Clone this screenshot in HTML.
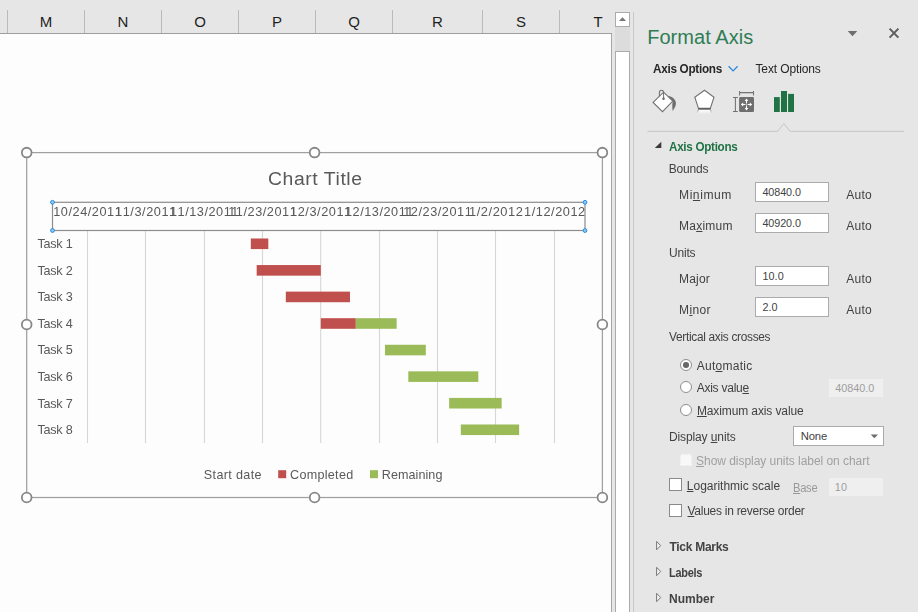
<!DOCTYPE html>
<html><head><meta charset="utf-8"><title>Format Axis</title>
<style>
html,body{margin:0;padding:0;}
body{width:918px;height:612px;overflow:hidden;background:#e6e6e6;font-family:"Liberation Sans",sans-serif;position:relative;}
#root{position:absolute;left:0;top:0;width:918px;height:612px;overflow:hidden;background:#e6e6e6;}
#sheet{position:absolute;left:0;top:33px;width:611px;height:579px;background:#fdfdfd;border-top:1px solid #9f9f9f;border-right:1px solid #a6a6a6;box-sizing:content-box;}
.sep{position:absolute;top:10px;width:1px;height:23px;background:#bababa;}
svg{position:absolute;left:0;top:0;}
.t{position:absolute;white-space:nowrap;color:#424242;}
.inp{position:absolute;box-sizing:border-box;background:#fff;border:1px solid #ababab;}
.dis{position:absolute;background:#efefef;}
u{text-decoration:underline;text-underline-offset:0.5px;text-decoration-thickness:1px;}
.rad{position:absolute;box-sizing:border-box;width:12px;height:12px;border-radius:50%;border:1px solid #8e8e8e;background:#fff;}
.cb{position:absolute;box-sizing:border-box;width:13px;height:13px;border:1px solid #8a8a8a;background:#fff;}
</style></head><body><div id="root">
<div class="sep" style="left:7px"></div><div class="sep" style="left:84px"></div><div class="sep" style="left:161px"></div><div class="sep" style="left:238px"></div><div class="sep" style="left:315px"></div><div class="sep" style="left:392px"></div><div class="sep" style="left:482px"></div><div class="sep" style="left:559px"></div>
<div id="sheet"></div>
<div style="position:absolute;left:615px;top:27px;width:15px;height:24px;background:#dcdcdc"></div>
<div style="position:absolute;left:615px;top:12px;width:15px;height:15px;box-sizing:border-box;border:1px solid #ababab;background:#fff"></div>
<div style="position:absolute;left:615px;top:51px;width:15px;height:570px;box-sizing:border-box;border:1px solid #ababab;background:#fff"></div>
<div style="position:absolute;left:633px;top:12px;width:1px;height:600px;background:#c8c8c8"></div>
<div class="inp" style="left:755px;top:182px;width:74px;height:20px"></div>
<div class="inp" style="left:755px;top:213px;width:74px;height:20px"></div>
<div class="inp" style="left:755px;top:266px;width:74px;height:20px"></div>
<div class="inp" style="left:755px;top:297px;width:74px;height:20px"></div>
<div class="inp" style="left:793px;top:426px;width:91px;height:20px"></div>
<div class="dis" style="left:828.6px;top:379px;width:54.5px;height:18px"></div>
<div class="dis" style="left:828.8px;top:478px;width:54.5px;height:18px"></div>
<div class="rad" style="left:680px;top:359px"><div style="position:absolute;left:2.2px;top:2.2px;width:5.6px;height:5.6px;border-radius:50%;background:#686868"></div></div>
<div class="rad" style="left:680px;top:381px"></div>
<div class="rad" style="left:680px;top:404px"></div>
<div class="cb" style="left:679.5px;top:453.5px;width:12px;height:12px;border:1px dotted #e9e9e9;background:#f8f8f8"></div>
<div class="cb" style="left:669px;top:478px"></div>
<div class="cb" style="left:669px;top:504px"></div>
<svg width="918" height="612" viewBox="0 0 918 612">
<line x1="87.50" y1="230.5" x2="87.50" y2="443" stroke="#d6d6d6" stroke-width="1.1"/><line x1="145.50" y1="230.5" x2="145.50" y2="443" stroke="#d6d6d6" stroke-width="1.1"/><line x1="204.50" y1="230.5" x2="204.50" y2="443" stroke="#d6d6d6" stroke-width="1.1"/><line x1="262.50" y1="230.5" x2="262.50" y2="443" stroke="#d6d6d6" stroke-width="1.1"/><line x1="320.70" y1="230.5" x2="320.70" y2="443" stroke="#d6d6d6" stroke-width="1.1"/><line x1="379.50" y1="230.5" x2="379.50" y2="443" stroke="#d6d6d6" stroke-width="1.1"/><line x1="437.50" y1="230.5" x2="437.50" y2="443" stroke="#d6d6d6" stroke-width="1.1"/><line x1="495.50" y1="230.5" x2="495.50" y2="443" stroke="#d6d6d6" stroke-width="1.1"/><line x1="554.50" y1="230.5" x2="554.50" y2="443" stroke="#d6d6d6" stroke-width="1.1"/><rect x="250.82" y="238.48" width="17.50" height="10.6" fill="#c0504d"/><rect x="256.66" y="265.06" width="64.16" height="10.6" fill="#c0504d"/><rect x="285.82" y="291.62" width="64.16" height="10.6" fill="#c0504d"/><rect x="320.82" y="318.19" width="35.00" height="10.6" fill="#c0504d"/><rect x="355.82" y="318.19" width="40.83" height="10.6" fill="#9bbb59"/><rect x="384.98" y="344.76" width="40.83" height="10.6" fill="#9bbb59"/><rect x="408.31" y="371.33" width="70.00" height="10.6" fill="#9bbb59"/><rect x="449.15" y="397.91" width="52.50" height="10.6" fill="#9bbb59"/><rect x="460.81" y="424.47" width="58.33" height="10.6" fill="#9bbb59"/><rect x="26.7" y="152.6" width="575.7" height="344.9" fill="none" stroke="#a0a0a0" stroke-width="1.25"/><rect x="52.5" y="202.3" width="532.5" height="28.2" fill="none" stroke="#8c8c8c" stroke-width="1.2"/><circle cx="26.7" cy="152.6" r="4.85" fill="#fff" stroke="#878787" stroke-width="1.8"/><circle cx="314.6" cy="152.6" r="4.85" fill="#fff" stroke="#878787" stroke-width="1.8"/><circle cx="602.4" cy="152.6" r="4.85" fill="#fff" stroke="#878787" stroke-width="1.8"/><circle cx="26.7" cy="324.5" r="4.85" fill="#fff" stroke="#878787" stroke-width="1.8"/><circle cx="602.4" cy="324.5" r="4.85" fill="#fff" stroke="#878787" stroke-width="1.8"/><circle cx="26.7" cy="497.5" r="4.85" fill="#fff" stroke="#878787" stroke-width="1.8"/><circle cx="314.6" cy="497.5" r="4.85" fill="#fff" stroke="#878787" stroke-width="1.8"/><circle cx="602.4" cy="497.5" r="4.85" fill="#fff" stroke="#878787" stroke-width="1.8"/><circle cx="52.5" cy="202.3" r="1.9" fill="#8ccbf7" stroke="#2b88d8" stroke-width="1"/><circle cx="52.5" cy="230.5" r="1.9" fill="#8ccbf7" stroke="#2b88d8" stroke-width="1"/><circle cx="585" cy="202.3" r="1.9" fill="#8ccbf7" stroke="#2b88d8" stroke-width="1"/><circle cx="585" cy="230.5" r="1.9" fill="#8ccbf7" stroke="#2b88d8" stroke-width="1"/><rect x="278.2" y="470.2" width="8" height="8" fill="#c0504d"/><rect x="370" y="470.2" width="8" height="8" fill="#9bbb59"/>
<path d="M618.9 21 L622.5 17.2 L626.1 21 Z" fill="#777"/>
<path d="M847.7 31 L857.3 31 L852.5 36.2 Z" fill="#6e6e6e"/>
<path d="M889.6 28.6 L898.4 37.6 M898.4 28.6 L889.6 37.6" stroke="#5e5e5e" stroke-width="2" fill="none"/>
<path d="M728.6 66.3 L733.1 70.9 L737.6 66.3" stroke="#2b88d8" stroke-width="1.3" fill="none"/>
<path d="M647.5 131.4 L777.6 131.4 L783.8 123.6 L790.2 131.4 L904 131.4" stroke="#c6c6c6" stroke-width="1" fill="none"/>
<!-- bars -->
<rect x="774" y="97.1" width="5.8" height="14.9" fill="#217346"/>
<rect x="781" y="91" width="6" height="21" fill="#217346"/>
<rect x="788.1" y="93.9" width="5.9" height="18.1" fill="#217346"/>
<!-- size -->
<rect x="739.1" y="97.1" width="14.9" height="14.9" rx="1.3" fill="#6e6e6e"/>
<path d="M739.5 92.6 L753.6 92.6 M739.6 91 L739.6 95.6 M753.5 91 L753.5 95.6 M735.4 97.4 L735.4 111.5 M733 97.5 L737.8 97.5 M733 111.4 L737.8 111.4" stroke="#727272" stroke-width="1.05" fill="none"/>
<path d="M742.3 104.5 L745.4 104.5 M747.6 104.5 L750.8 104.5 M746.5 100.2 L746.5 103.4 M746.5 105.6 L746.5 108.8" stroke="#fff" stroke-width="1.1" fill="none"/>
<path d="M746.5 98.6 L748.4 101 L744.6 101 Z M746.5 110.4 L748.4 108 L744.6 108 Z M740.8 104.5 L743.2 102.6 L743.2 106.4 Z M752.2 104.5 L749.8 102.6 L749.8 106.4 Z" fill="#fff"/>
<rect x="746.1" y="104.1" width="0.8" height="0.8" fill="#ddd"/>
<!-- pentagon -->
<defs><linearGradient id="pg" x1="0" y1="0" x2="0" y2="1"><stop offset="0" stop-color="#fff" stop-opacity="0.95"/><stop offset="1" stop-color="#fff" stop-opacity="0.1"/></linearGradient>
<linearGradient id="pg2" x1="0" y1="0" x2="0" y2="1"><stop offset="0" stop-color="#777" stop-opacity="0.9"/><stop offset="1" stop-color="#777" stop-opacity="0"/></linearGradient></defs>
<path d="M704.5 90.3 L714 97.2 L710.3 108.4 L698.5 108.4 L694.8 97.2 Z" fill="#fff" stroke="#727272" stroke-width="1.1" stroke-linejoin="miter"/>
<path d="M698.4 109.7 L710.4 109.7 L712 113.9 L697 113.9 Z" fill="url(#pg)"/>
<path d="M698.4 109.6 L697.2 113.4 M710.4 109.6 L711.6 113.4" stroke="url(#pg2)" stroke-width="0.9" fill="none"/>
<path d="M698.3 108.9 L710.5 108.9" stroke="#5a5a5a" stroke-width="1.5"/>
<!-- bucket -->
<path d="M667.4 95.7 C671.5 96.2 675 98.6 675.9 102.4 C676.4 105.6 674.3 108.6 672.5 110.9 C672.6 108.5 672.1 106 672.3 104 C672.4 102.8 672.7 102 672.9 101.2 Z" fill="#6e6e6e"/>
<path d="M653.1 102.4 L663.6 92.2 L672.8 101.1 L662.5 111.7 Z" fill="#fff" stroke="#727272" stroke-width="1.1" stroke-linejoin="miter"/>
<path d="M659.4 96.2 L659.4 92.4 A2.1 2.1 0 0 1 663.6 92.4 L663.6 98.4" stroke="#727272" stroke-width="1.05" fill="none"/>
<circle cx="663.5" cy="98.8" r="1.3" fill="#6e6e6e"/>
<!-- section triangles -->
<path d="M661.3 141.7 L661.3 148.1 L654.8 148.1 Z" fill="#3a3a3a"/>
<path d="M656.6 541.4 L660.7 545.6 L656.6 549.8 Z" fill="#f2f2f2" stroke="#787878" stroke-width="1"/>
<path d="M656.6 567.3 L660.7 571.5 L656.6 575.7 Z" fill="#f2f2f2" stroke="#787878" stroke-width="1"/>
<path d="M656.6 593.3 L660.7 597.5 L656.6 601.7 Z" fill="#f2f2f2" stroke="#787878" stroke-width="1"/>
<path d="M870.7 434.4 L878 434.4 L874.35 438.3 Z" fill="#6e6e6e"/>

</svg>
<div id="ptitle" class="t" style="left:647.20px;top:23.00px;font-size:20px;height:28px;line-height:28px;letter-spacing:0.042px;color:#2f7d55;">Format Axis</div>
<div id="i_min" class="t" style="left:762.40px;top:185.00px;font-size:10.8px;height:15px;line-height:15px;letter-spacing:-0.089px;">40840.0</div>
<div id="i_max" class="t" style="left:762.40px;top:216.00px;font-size:10.8px;height:15px;line-height:15px;letter-spacing:-0.089px;">40920.0</div>
<div id="i_major" class="t" style="left:762.40px;top:269.00px;font-size:10.8px;height:15px;line-height:15px;letter-spacing:0.095px;">10.0</div>
<div id="i_minor" class="t" style="left:762.40px;top:300.00px;font-size:10.8px;height:15px;line-height:15px;letter-spacing:0.092px;">2.0</div>
<div id="i_dis" class="t" style="left:835.20px;top:381.00px;font-size:10.8px;height:15px;line-height:15px;letter-spacing:0.011px;color:#9e9e9e;">40840.0</div>
<div id="i_none" class="t" style="left:800.70px;top:428.00px;font-size:11.3px;height:16px;line-height:16px;letter-spacing:-0.139px;">None</div>
<div id="i_ten" class="t" style="left:834.80px;top:480.00px;font-size:10.8px;height:15px;line-height:15px;letter-spacing:0.184px;color:#9e9e9e;">10</div>
<div id="colM" class="t" style="left:39.75px;top:11.00px;font-size:15px;height:21px;line-height:21px;letter-spacing:0.000px;color:#1f1f1f;">M</div>
<div id="colN" class="t" style="left:117.58px;top:11.00px;font-size:15px;height:21px;line-height:21px;letter-spacing:0.000px;color:#1f1f1f;">N</div>
<div id="colO" class="t" style="left:194.16px;top:11.00px;font-size:15px;height:21px;line-height:21px;letter-spacing:0.000px;color:#1f1f1f;">O</div>
<div id="colP" class="t" style="left:271.99px;top:11.00px;font-size:15px;height:21px;line-height:21px;letter-spacing:0.000px;color:#1f1f1f;">P</div>
<div id="colQ" class="t" style="left:348.16px;top:11.00px;font-size:15px;height:21px;line-height:21px;letter-spacing:0.000px;color:#1f1f1f;">Q</div>
<div id="colR" class="t" style="left:432.08px;top:11.00px;font-size:15px;height:21px;line-height:21px;letter-spacing:0.000px;color:#1f1f1f;">R</div>
<div id="colS" class="t" style="left:515.99px;top:11.00px;font-size:15px;height:21px;line-height:21px;letter-spacing:0.000px;color:#1f1f1f;">S</div>
<div id="colT" class="t" style="left:593.41px;top:11.00px;font-size:15px;height:21px;line-height:21px;letter-spacing:0.000px;color:#1f1f1f;">T</div>
<div id="gs" style="position:absolute;left:0;top:0;width:918px;height:612px;will-change:transform">
<div id="t_ao" class="t" style="left:652.60px;top:61.00px;font-size:12px;height:17px;line-height:17px;letter-spacing:-0.300px;transform:scaleX(0.9786);transform-origin:0 0;color:#262626;font-weight:bold;">Axis Options</div>
<div id="t_to" class="t" style="left:755.50px;top:61.00px;font-size:12px;height:17px;line-height:17px;letter-spacing:-0.128px;color:#262626;">Text Options</div>
<div id="t_ao2" class="t" style="left:669.20px;top:139.00px;font-size:12px;height:17px;line-height:17px;letter-spacing:-0.300px;transform:scaleX(0.9729);transform-origin:0 0;color:#217346;font-weight:bold;">Axis Options</div>
<div id="t_bounds" class="t" style="left:668.80px;top:161.00px;font-size:12px;height:17px;line-height:17px;letter-spacing:-0.221px;">Bounds</div>
<div id="t_min" class="t" style="left:679.00px;top:187.00px;font-size:12px;height:17px;line-height:17px;letter-spacing:0.550px;transform:scaleX(1.0076);transform-origin:0 0;">Mi<u>n</u>imum</div>
<div id="t_auto1" class="t" style="left:846.20px;top:187.00px;font-size:12px;height:17px;line-height:17px;letter-spacing:0.271px;">Auto</div>
<div id="t_max" class="t" style="left:679.00px;top:218.00px;font-size:12px;height:17px;line-height:17px;letter-spacing:0.247px;">Ma<u>x</u>imum</div>
<div id="t_auto2" class="t" style="left:846.20px;top:218.00px;font-size:12px;height:17px;line-height:17px;letter-spacing:0.271px;">Auto</div>
<div id="t_units" class="t" style="left:669.10px;top:245.00px;font-size:12px;height:17px;line-height:17px;letter-spacing:-0.211px;">Units</div>
<div id="t_major" class="t" style="left:679.00px;top:271.00px;font-size:12px;height:17px;line-height:17px;letter-spacing:0.196px;">Ma<u>j</u>or</div>
<div id="t_auto3" class="t" style="left:846.20px;top:271.00px;font-size:12px;height:17px;line-height:17px;letter-spacing:0.271px;">Auto</div>
<div id="t_minor" class="t" style="left:679.00px;top:302.00px;font-size:12px;height:17px;line-height:17px;letter-spacing:0.396px;">M<u>i</u>nor</div>
<div id="t_auto4" class="t" style="left:846.20px;top:302.00px;font-size:12px;height:17px;line-height:17px;letter-spacing:0.271px;">Auto</div>
<div id="t_vac" class="t" style="left:668.50px;top:329.00px;font-size:12px;height:17px;line-height:17px;letter-spacing:-0.300px;transform:scaleX(0.9883);transform-origin:0 0;">Vertical axis crosses</div>
<div id="t_automatic" class="t" style="left:696.70px;top:358.00px;font-size:12px;height:17px;line-height:17px;letter-spacing:0.266px;">Aut<u>o</u>matic</div>
<div id="t_av" class="t" style="left:696.70px;top:380.00px;font-size:12px;height:17px;line-height:17px;letter-spacing:-0.247px;">Axis valu<u>e</u></div>
<div id="t_mav" class="t" style="left:696.90px;top:403.00px;font-size:12px;height:17px;line-height:17px;letter-spacing:-0.112px;"><u>M</u>aximum axis value</div>
<div id="t_du" class="t" style="left:668.90px;top:429.00px;font-size:12px;height:17px;line-height:17px;letter-spacing:-0.105px;">Display <u>u</u>nits</div>
<div id="t_show" class="t" style="left:696.10px;top:453.00px;font-size:12px;height:17px;line-height:17px;letter-spacing:-0.043px;color:#a0a0a0;"><u>S</u>how display units label on chart</div>
<div id="t_log" class="t" style="left:686.80px;top:478.00px;font-size:12px;height:17px;line-height:17px;letter-spacing:-0.006px;"><u>L</u>ogarithmic scale</div>
<div id="t_base" class="t" style="left:792.80px;top:480.00px;font-size:12px;height:17px;line-height:17px;letter-spacing:-0.300px;transform:scaleX(0.9292);transform-origin:0 0;color:#999;"><u>B</u>ase</div>
<div id="t_vro" class="t" style="left:687.50px;top:503.00px;font-size:12px;height:17px;line-height:17px;letter-spacing:-0.268px;"><u>V</u>alues in reverse order</div>
<div id="t_tm" class="t" style="left:669.40px;top:539.00px;font-size:12px;height:17px;line-height:17px;letter-spacing:-0.270px;font-weight:bold;">Tick Marks</div>
<div id="t_lab" class="t" style="left:669.10px;top:565.00px;font-size:12px;height:17px;line-height:17px;letter-spacing:-0.300px;transform:scaleX(0.9147);transform-origin:0 0;font-weight:bold;">Labels</div>
<div id="t_num" class="t" style="left:669.10px;top:591.00px;font-size:12px;height:17px;line-height:17px;letter-spacing:-0.009px;font-weight:bold;">Number</div>
<div id="title" class="t" style="left:267.70px;top:166.00px;font-size:18.8px;height:26px;line-height:26px;letter-spacing:0.550px;transform:scaleX(1.0319);transform-origin:0 0;color:#595959;">Chart Title</div>
<div id="lg1" class="t" style="left:203.80px;top:466.00px;font-size:12.6px;height:18px;line-height:18px;letter-spacing:0.343px;color:#595959;">Start date</div>
<div id="lg2" class="t" style="left:290.00px;top:466.00px;font-size:12.6px;height:18px;line-height:18px;letter-spacing:0.287px;color:#595959;">Completed</div>
<div id="lg3" class="t" style="left:381.80px;top:466.00px;font-size:12.6px;height:18px;line-height:18px;letter-spacing:0.050px;color:#595959;">Remaining</div>
<div id="task1" class="t" style="left:37.50px;top:235.00px;font-size:12.6px;height:18px;line-height:18px;letter-spacing:-0.241px;color:#595959;">Task 1</div>
<div id="task2" class="t" style="left:37.50px;top:262.00px;font-size:12.6px;height:18px;line-height:18px;letter-spacing:-0.241px;color:#595959;">Task 2</div>
<div id="task3" class="t" style="left:37.50px;top:288.00px;font-size:12.6px;height:18px;line-height:18px;letter-spacing:-0.241px;color:#595959;">Task 3</div>
<div id="task4" class="t" style="left:37.50px;top:315.00px;font-size:12.6px;height:18px;line-height:18px;letter-spacing:-0.241px;color:#595959;">Task 4</div>
<div id="task5" class="t" style="left:37.50px;top:341.00px;font-size:12.6px;height:18px;line-height:18px;letter-spacing:-0.241px;color:#595959;">Task 5</div>
<div id="task6" class="t" style="left:37.50px;top:368.00px;font-size:12.6px;height:18px;line-height:18px;letter-spacing:-0.241px;color:#595959;">Task 6</div>
<div id="task7" class="t" style="left:37.50px;top:395.00px;font-size:12.6px;height:18px;line-height:18px;letter-spacing:-0.241px;color:#595959;">Task 7</div>
<div id="task8" class="t" style="left:37.50px;top:421.00px;font-size:12.6px;height:18px;line-height:18px;letter-spacing:-0.241px;color:#595959;">Task 8</div>
<div id="date0" class="t" style="left:53.28px;top:203.00px;font-size:12.7px;height:18px;line-height:18px;letter-spacing:0.549px;color:#595959;font-kerning:none;">10/24/2011</div>
<div id="date1" class="t" style="left:115.24px;top:203.00px;font-size:12.7px;height:18px;line-height:18px;letter-spacing:0.550px;transform:scaleX(1.0052);transform-origin:0 0;color:#595959;font-kerning:none;">11/3/2011</div>
<div id="date2" class="t" style="left:169.94px;top:203.00px;font-size:12.7px;height:18px;line-height:18px;letter-spacing:0.549px;color:#595959;font-kerning:none;">11/13/2011</div>
<div id="date3" class="t" style="left:228.27px;top:203.00px;font-size:12.7px;height:18px;line-height:18px;letter-spacing:0.549px;color:#595959;font-kerning:none;">11/23/2011</div>
<div id="date4" class="t" style="left:290.23px;top:203.00px;font-size:12.7px;height:18px;line-height:18px;letter-spacing:0.550px;transform:scaleX(1.0052);transform-origin:0 0;color:#595959;font-kerning:none;">12/3/2011</div>
<div id="date5" class="t" style="left:344.93px;top:203.00px;font-size:12.7px;height:18px;line-height:18px;letter-spacing:0.549px;color:#595959;font-kerning:none;">12/13/2011</div>
<div id="date6" class="t" style="left:403.26px;top:203.00px;font-size:12.7px;height:18px;line-height:18px;letter-spacing:0.549px;color:#595959;font-kerning:none;">12/23/2011</div>
<div id="date7" class="t" style="left:468.86px;top:203.00px;font-size:12.7px;height:18px;line-height:18px;letter-spacing:0.550px;transform:scaleX(1.0124);transform-origin:0 0;color:#595959;font-kerning:none;">1/2/2012</div>
<div id="date8" class="t" style="left:523.55px;top:203.00px;font-size:12.7px;height:18px;line-height:18px;letter-spacing:0.550px;transform:scaleX(1.0052);transform-origin:0 0;color:#595959;font-kerning:none;">1/12/2012</div>
</div>
</div></body></html>
